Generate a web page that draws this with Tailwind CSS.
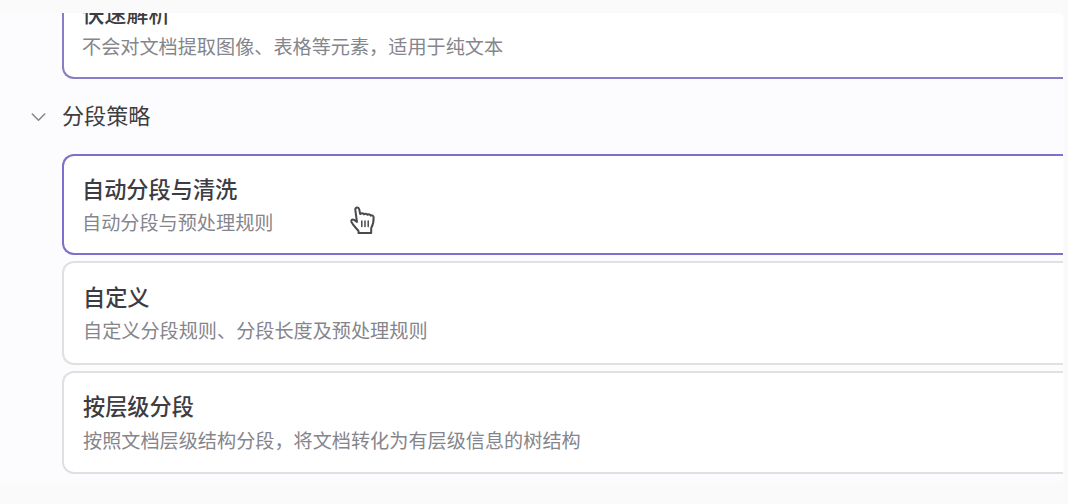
<!DOCTYPE html>
<html lang="zh-CN">
<head>
<meta charset="utf-8">
<title>分段策略</title>
<script src="https://cdn.jsdelivr.net/npm/@tailwindcss/browser@4"></script>
</head>
<body class="h-[504px] w-[1068px] overflow-hidden bg-[#fafafa] pt-[13px] font-['Noto_Sans_CJK_SC',sans-serif]">
<main class="relative flex h-[470px] w-[1064px] flex-col overflow-hidden rounded-r-[6px] bg-[#fcfcff] pl-[62px] pr-px">
  <section class="-mt-[36px] h-[102px] shrink-0 rounded-l-[12px] border-2 border-r-0 border-[#887dc6] bg-white pl-[18px] pt-[16px]">
    <h3 class="h-[35px] text-[22.2px] leading-[34px] font-medium text-[#3c3c42]">快速解析</h3>
    <p class="h-[32px] text-[19.15px] leading-[32px] text-[#85858c]">不会对文档提取图像、表格等元素，适用于纯文本</p>
  </section>
  <div class="-ml-[32px] flex h-[75px] shrink-0 items-center gap-[15px]">
    <svg class="h-[16px] w-[17px]" viewBox="0 0 17 16" fill="none" stroke="#85858a" stroke-width="1.5" stroke-linecap="round" stroke-linejoin="round"><path d="M2.3 5 8.5 11.2 14.7 5"/></svg>
    <h2 class="pb-[5px] text-[22.1px] leading-[34px] text-[#3c3c42]">分段策略</h2>
  </div>
  <section class="h-[101px] shrink-0 rounded-l-[12px] border-2 border-r-0 border-[#7d70cc] bg-white pl-[18px] pt-[15px]">
    <h3 class="h-[35px] text-[22.2px] leading-[34px] font-medium text-[#3c3c42]">自动分段与清洗</h3>
    <p class="h-[32px] text-[19.15px] leading-[32px] text-[#85858c]">自动分段与预处理规则</p>
  </section>
  <section class="mt-[6px] h-[104px] shrink-0 rounded-l-[12px] border-2 border-r-0 border-[#e0e0e2] bg-white pl-[19px] pt-[16px]">
    <h3 class="h-[35px] text-[22.2px] leading-[34px] font-medium text-[#3c3c42]">自定义</h3>
    <p class="h-[32px] text-[19.15px] leading-[32px] text-[#85858c]">自定义分段规则、分段长度及预处理规则</p>
  </section>
  <section class="mt-[6px] h-[103px] shrink-0 rounded-l-[12px] border-2 border-r-0 border-[#e0e0e2] bg-white pl-[19px] pt-[15px]">
    <h3 class="h-[36px] text-[22.2px] leading-[34px] font-medium text-[#3c3c42]">按层级分段</h3>
    <p class="h-[32px] text-[19.15px] leading-[32px] text-[#85858c]">按照文档层级结构分段，将文档转化为有层级信息的树结构</p>
  </section>
  <svg class="absolute left-[348px] top-[192px]" width="28" height="30" viewBox="0 0 28 30" fill="#fff" stroke="#4a4a4e" stroke-width="2" stroke-linejoin="round" stroke-linecap="round"><path d="M10.500 28v-2C8 23 5 20 3.500 17c-.8-1.800.8-3.200 2.600-2.100L9 17 7.300 5C7 2 10.600 1.500 11.200 4.200L12.200 9c1-1.100 3.200-1 3.700.3 1-1 3-.8 3.600.5 1.200-.8 2.700-.5 3.200.8 1.400-.7 2.800.1 2.900 1.700.2 4.300-.2 7-2.400 10.700V28Z"/><path stroke-width="1.500" d="M13.800 16v5.500M17 16v5.500M20.200 16v5.500"/></svg>
</main>
</body>
</html>
